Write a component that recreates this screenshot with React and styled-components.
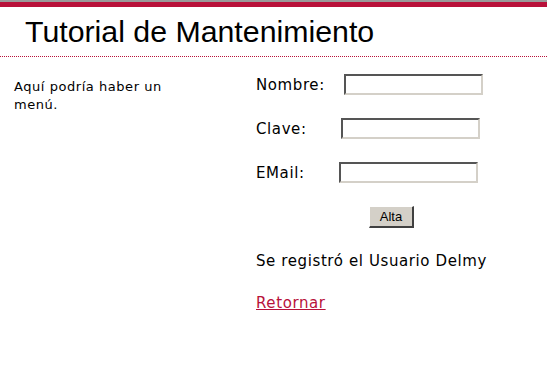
import React from 'react';
import styled, { createGlobalStyle } from 'styled-components';

const GlobalStyle = createGlobalStyle`
    html, body {
        margin: 0;
        padding: 0;
        background: #fff;
    }
    body {
        font-family: "DejaVu Sans", Verdana, sans-serif;
        color: #000;
    }
`

const TopBar = styled.div`
    height: 5px;
    background: #b8113a;
    border-top: 2px solid #9a9a9a;
`

const Header = styled.div`
    height: 49px;
    border-bottom: 1px dotted #b8113a;
    display: flex;
    align-items: center;
    padding-left: 25px;
`

const Title = styled.h1`
    margin: 0;
    font-family: "Liberation Sans", Arial, sans-serif;
    font-weight: 400;
    font-size: 30.3px;
`

const Body = styled.div`
    display: flex;
    padding-top: 17px;
`

const Sidebar = styled.div`
    width: 170px;
    padding: 4px 0 0 14px;
    font-size: 13px;
    line-height: 18px;
    letter-spacing: 0.55px;
`

const Main = styled.div`
    margin-left: 72px;
    display: flex;
    flex-direction: column;
    font-size: 15px;
    letter-spacing: 0.6px;
`

const FieldRow = styled.div`
    display: flex;
    align-items: center;
    height: 21px;
    margin-bottom: 23px;
`

const Input = styled.input`
    box-sizing: border-box;
    width: 139px;
    height: 21px;
    margin: 0 0 0 ${props => props.$offset}px;
    border-width: 2px;
    border-style: solid;
    border-color: #555 #d4d0c8 #d4d0c8 #555;
    background: #fff;
    padding: 0 3px;
`

const ButtonRow = styled.div`
    padding-left: 113px;
`

const Button = styled.button`
    box-sizing: border-box;
    width: 45px;
    height: 22px;
    background: #d4d0c8;
    border-width: 1px 2px 2px 1px;
    border-style: solid;
    border-color: #fff #404040 #404040 #fff;
    font-family: "Liberation Sans", Arial, sans-serif;
    font-size: 13px;
    letter-spacing: 0;
    padding: 0;
`

const Message = styled.p`
    margin: 22px 0 0;
    line-height: 22px;
`

const Link = styled.a`
    margin-top: 20px;
    color: #b8113a;
    text-decoration: underline;
    line-height: 22px;
`

const fields = [
    { label: 'Nombre:', offset: 19 },
    { label: 'Clave:', offset: 34 },
    { label: 'EMail:', offset: 34 },
]

const App = () => {
    return (
        <>
            <GlobalStyle />
            <TopBar />
            <Header>
                <Title>Tutorial de Mantenimiento</Title>
            </Header>
            <Body>
                <Sidebar>Aquí podría haber un menú.</Sidebar>
                <Main>
                    {fields.map((field) => (
                        <FieldRow key={field.label}>
                            <span>{field.label}</span>
                            <Input type="text" $offset={field.offset} />
                        </FieldRow>
                    ))}
                    <ButtonRow>
                        <Button>Alta</Button>
                    </ButtonRow>
                    <Message>Se registró el Usuario Delmy</Message>
                    <Link href="#">Retornar</Link>
                </Main>
            </Body>
        </>
    )
}

export default App
